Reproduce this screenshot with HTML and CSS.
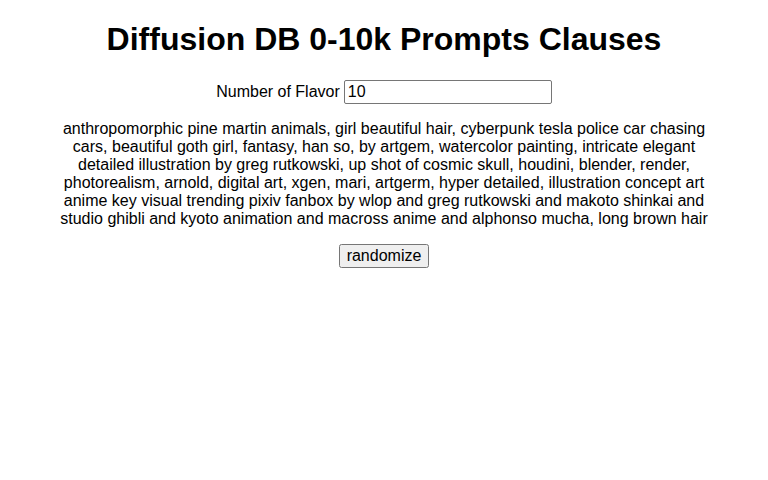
FILE: index.html
```html
<!DOCTYPE html>
<html>
<head>
    <title>Diffusion DB Prompts Clauses</title>
    <link rel="stylesheet" href="styles.css">
</head>
<body>
    <h1>Diffusion DB 0-10k Prompts Clauses</h1>
    <div class="controls">
        <label for="flavorInput">Number of Flavor</label>
        <input type="text" id="flavorInput" value="10">
    </div>
    <p id="prompt" class="prompt">anthropomorphic pine martin animals, girl beautiful hair, cyberpunk tesla police car chasing cars, beautiful goth girl, fantasy, han so, by artgem, watercolor painting, intricate elegant detailed illustration by greg rutkowski, up shot of cosmic skull, houdini, blender, render, photorealism, arnold, digital art, xgen, mari, artgerm, hyper detailed, illustration concept art anime key visual trending pixiv fanbox by wlop and greg rutkowski and makoto shinkai and studio ghibli and kyoto animation and macross anime and alphonso mucha, long brown hair</p>
    <div class="actions">
        <button id="randomize">randomize</button>
    </div>
</body>
</html>
```
FILE: styles.css
```css
body { font-family: "Liberation Sans", Arial, sans-serif; margin: 8px; text-align: center; color: #000; background: #fff; }
h1 { font-size: 32px; margin: 13px 0 22px; }
.controls { display: flex; justify-content: center; align-items: center; gap: 4px; font-size: 16px; }
.controls input { font-family: "Liberation Sans", Arial, sans-serif; font-size: 16px; width: 208px; height: 24px; box-sizing: border-box; padding: 1px 3px; border: 1px solid #767676; border-radius: 2px; }
.prompt { max-width: 660px; margin: 16px auto; font-size: 16px; line-height: 18px; }
.actions button { font-family: "Liberation Sans", Arial, sans-serif; font-size: 16px; padding: 1px 6px; }
```
